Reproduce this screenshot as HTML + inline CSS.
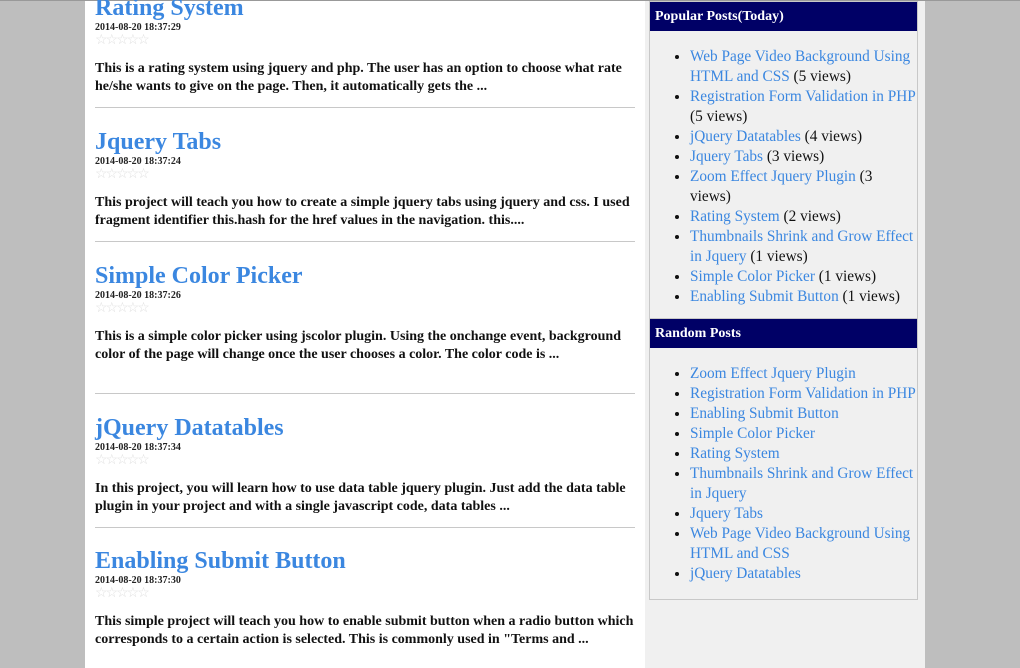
<!DOCTYPE html>
<html><head><style>
*{margin:0;padding:0;box-sizing:border-box}
body{width:1020px;height:668px;background:#bebebe;font-family:"Liberation Serif",serif;overflow:hidden;position:relative}
.top{position:absolute;left:0;top:0;width:1020px;height:1px;background:#999}
.main{position:absolute;left:85px;top:1px;width:560px;height:667px;background:#fff}
.side{position:absolute;left:645px;top:1px;width:280px;height:667px;background:#f0f0f0}
.post{position:absolute;left:10px;width:540px}
.post h2{font-size:24px;line-height:28px;color:#3b87e0;font-weight:bold}
.date{font-size:10px;font-weight:bold;color:#222;line-height:12px}
.stars{color:#e0e0e0;font-size:14px;line-height:13px;letter-spacing:-2px}
.post p{font-size:14px;font-weight:bold;line-height:18px;color:#111;margin-top:13px}
.hr{position:absolute;left:10px;width:540px;height:1px;background:#c8c8c8}
.box{position:absolute;left:4px;width:269px;border:1px solid #c8c8c8;background:#f0f0f0}
.box h3{background:#000066;color:#fff;font-size:14px;font-weight:bold;padding:0 5px;height:29px;line-height:29px}
.box ul{margin:16px 0 15px 40px;font-size:15.3px;line-height:20px;color:#111}
.box a{color:#3b87e0;text-decoration:none}
</style></head><body>
<div class="top"></div>
<div class="main">
<div class="post" style="top:-7px"><h2>Rating System</h2><div class="date">2014-08-20 18:37:29</div><div class="stars">☆☆☆☆☆</div><p>This is a rating system using jquery and php. The user has an option to choose what rate he/she wants to give on the page. Then, it automatically gets the ...</p></div>
<div class="hr" style="top:106px"></div>
<div class="post" style="top:127px"><h2>Jquery Tabs</h2><div class="date">2014-08-20 18:37:24</div><div class="stars">☆☆☆☆☆</div><p>This project will teach you how to create a simple jquery tabs using jquery and css. I used fragment identifier this.hash for the href values in the navigation. this....</p></div>
<div class="hr" style="top:240px"></div>
<div class="post" style="top:261px"><h2>Simple Color Picker</h2><div class="date">2014-08-20 18:37:26</div><div class="stars">☆☆☆☆☆</div><p>This is a simple color picker using jscolor plugin. Using the onchange event, background color of the page will change once the user chooses a color. The color code is ...</p></div>
<div class="hr" style="top:392px"></div>
<div class="post" style="top:413px"><h2>jQuery Datatables</h2><div class="date">2014-08-20 18:37:34</div><div class="stars">☆☆☆☆☆</div><p>In this project, you will learn how to use data table jquery plugin. Just add the data table plugin in your project and with a single javascript code, data tables ...</p></div>
<div class="hr" style="top:526px"></div>
<div class="post" style="top:546px"><h2>Enabling Submit Button</h2><div class="date">2014-08-20 18:37:30</div><div class="stars">☆☆☆☆☆</div><p>This simple project will teach you how to enable submit button when a radio button which corresponds to a certain action is selected. This is commonly used in "Terms and ...</p></div>
</div>
<div class="side">
<div class="box" style="top:0">
<h3>Popular Posts(Today)</h3>
<ul>
<li><a>Web Page Video Background Using HTML and CSS</a> (5 views)</li>
<li><a>Registration Form Validation in PHP</a> (5 views)</li>
<li><a>jQuery Datatables</a> (4 views)</li>
<li><a>Jquery Tabs</a> (3 views)</li>
<li><a>Zoom Effect Jquery Plugin</a> (3 views)</li>
<li><a>Rating System</a> (2 views)</li>
<li><a>Thumbnails Shrink and Grow Effect in Jquery</a> (1 views)</li>
<li><a>Simple Color Picker</a> (1 views)</li>
<li><a>Enabling Submit Button</a> (1 views)</li>
</ul></div>
<div class="box" style="top:317px">
<h3>Random Posts</h3>
<ul>
<li><a>Zoom Effect Jquery Plugin</a></li>
<li><a>Registration Form Validation in PHP</a></li>
<li><a>Enabling Submit Button</a></li>
<li><a>Simple Color Picker</a></li>
<li><a>Rating System</a></li>
<li><a>Thumbnails Shrink and Grow Effect in Jquery</a></li>
<li><a>Jquery Tabs</a></li>
<li><a>Web Page Video Background Using HTML and CSS</a></li>
<li><a>jQuery Datatables</a></li>
</ul></div>
</div>
</body></html>
